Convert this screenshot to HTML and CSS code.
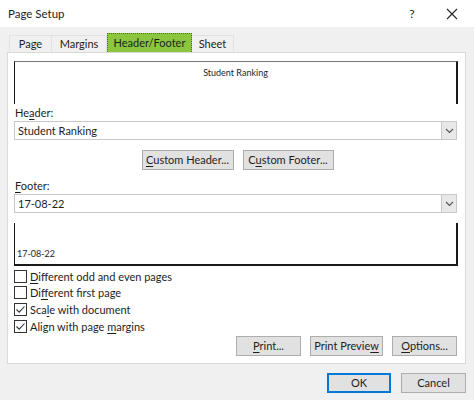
FILE: index.html
```html
<!DOCTYPE html>
<html>
<head>
<meta charset="utf-8">
<link rel="stylesheet" href="styles.css">
</head>
<body>
<div class="dialog">
  <div class="titlebar">
    <span class="title">Page Setup</span>
    <span class="help">?</span>
    <span class="close">
      <svg width="12" height="12" viewBox="0 0 12 12"><path d="M1 1 L11 11 M11 1 L1 11" stroke="#222" stroke-width="1.1" fill="none"/></svg>
    </span>
  </div>
  <div class="tabs">
    <div class="tab t-page">Page</div>
    <div class="tab t-margins">Margins</div>
    <div class="tab active">Header/Footer</div>
    <div class="tab t-sheet">Sheet</div>
  </div>
  <div class="panel">
    <div class="preview header-preview"><span>Student Ranking</span></div>
    <div class="label">He<u>a</u>der:</div>
    <div class="select"><span>Student Ranking</span><span class="drop"><svg width="9" height="6" viewBox="0 0 9 6"><path d="M1 1 L4.5 4.5 L8 1" stroke="#555" stroke-width="1.1" fill="none"/></svg></span></div>
    <div class="custom-row">
      <div class="btn b-custom"><u>C</u>ustom Header...</div>
      <div class="btn b-custom">C<u>u</u>stom Footer...</div>
    </div>
    <div class="label"><u>F</u>ooter:</div>
    <div class="select"><span>17-08-22</span><span class="drop"><svg width="9" height="6" viewBox="0 0 9 6"><path d="M1 1 L4.5 4.5 L8 1" stroke="#555" stroke-width="1.1" fill="none"/></svg></span></div>
    <div class="preview footer-preview"><span>17-08-22</span></div>
    <div class="checks">
      <div class="check"><span class="box"></span><span><u>D</u>ifferent odd and even pages</span></div>
      <div class="check"><span class="box"></span><span>Di<u>f</u>ferent first page</span></div>
      <div class="check"><span class="box"><svg width="11" height="11" viewBox="0 0 11 11"><path d="M1.5 5.5 L4.2 8.2 L9.5 2.5" stroke="#333" stroke-width="1.1" fill="none"/></svg></span><span>Sca<u>l</u>e with document</span></div>
      <div class="check"><span class="box"><svg width="11" height="11" viewBox="0 0 11 11"><path d="M1.5 5.5 L4.2 8.2 L9.5 2.5" stroke="#333" stroke-width="1.1" fill="none"/></svg></span><span>Align with page <u>m</u>argins</span></div>
    </div>
    <div class="print-row">
      <div class="btn b-print"><u>P</u>rint...</div>
      <div class="btn b-preview">Print Previe<u>w</u></div>
      <div class="btn b-options"><u>O</u>ptions...</div>
    </div>
  </div>
  <div class="footer">
    <div class="btn b-ok">OK</div>
    <div class="btn b-cancel">Cancel</div>
  </div>
</div>
</body>
</html>
```
FILE: styles.css
```css
* { box-sizing: border-box; }
html, body { margin: 0; padding: 0; }
body {
  width: 474px;
  height: 400px;
  background: #f0f0f0;
  font-family: Lato, "Noto Sans", sans-serif;
  font-size: 11px;
  color: #1e1e1e;
  overflow: hidden;
  white-space: nowrap;
}
u { text-decoration: underline; text-underline-offset: 2px; }
.dialog { width: 474px; height: 400px; }
.titlebar {
  height: 27px;
  background: #fff;
  display: flex;
  align-items: center;
  padding-left: 8px;
}
.title { font-size: 11.5px; flex: 1; }
.help { width: 40px; text-align: center; font-size: 12px; }
.close { width: 40px; display: flex; justify-content: center; margin-right: 2px; }
.tabs {
  display: flex;
  align-items: flex-end;
  margin-top: 7px;
  padding-left: 9px;
  height: 18px;
}
.tab {
  height: 17px;
  line-height: 16px;
  text-align: center;
  border: 1px solid #e2e2e2;
  border-bottom: none;
  background: #f0f0f0;
}
.t-page { width: 43px; }
.t-margins { width: 55px; border-left: none; }
.t-sheet { width: 42px; border-left: none; }
.tab.active {
  width: 85px;
  height: 19px;
  line-height: 18px;
  background: #8cc63f;
  border: 1px dotted #4a7a10;
  border-bottom: none;
}
.panel {
  margin: 0 8px 0 7px;
  height: 312px;
  background: #fff;
  border: 1px solid #d9d9d9;
  padding: 8px 7px 0 6px;
}
.preview {
  height: 43px;
  border-color: #1a1a1a;
  border-style: solid;
  font-size: 9px;
}
.header-preview {
  border-width: 1px 2px 0 1px;
  border-top-color: #777;
  text-align: center;
  padding-top: 5px;
}
.footer-preview {
  border-width: 0 2px 2px 1px;
  margin-top: 10px;
  display: flex;
  align-items: flex-end;
  padding: 0 0 5px 2px;
}
.label { margin-top: 1px; height: 16px; line-height: 16px; padding-left: 1px; }
.select {
  height: 19px;
  border: 1px solid #c8c8c8;
  display: flex;
  align-items: center;
  justify-content: space-between;
  padding-left: 3px;
  margin-right: 1px;
}
.drop {
  width: 15px;
  height: 17px;
  background: #e8e8e8;
  border-left: 1px solid #c8c8c8;
  display: flex;
  align-items: center;
  justify-content: center;
}
.btn {
  height: 20px;
  line-height: 18px;
  text-align: center;
  background: #e1e1e1;
  border: 1px solid #adadad;
}
.custom-row {
  display: flex;
  justify-content: center;
  gap: 9px;
  margin-top: 10px;
  padding-left: 3px;
  margin-bottom: 8px;
}
.b-custom { width: 92px; }
.b-custom + .b-custom { width: 91px; }
.checks { margin-top: 2px; }
.check {
  display: flex;
  align-items: center;
  height: 16.6px;
  gap: 3px;
}
.box {
  width: 13px;
  height: 13px;
  border: 1px solid #333;
  display: flex;
  align-items: center;
  justify-content: center;
  background: #fff;
}
.print-row {
  display: flex;
  justify-content: flex-end;
  gap: 9px;
  margin-top: 2px;
  padding-right: 1px;
}
.b-print { width: 65px; }
.b-preview { width: 73px; }
.b-options { width: 65px; }
.footer {
  display: flex;
  justify-content: flex-end;
  gap: 10px;
  margin-top: 9px;
  padding-right: 8px;
}
.b-ok { width: 64px; border: 1px solid #0078d7; box-shadow: inset 0 0 0 1px #0078d7; }
.b-cancel { width: 65px; }
```
